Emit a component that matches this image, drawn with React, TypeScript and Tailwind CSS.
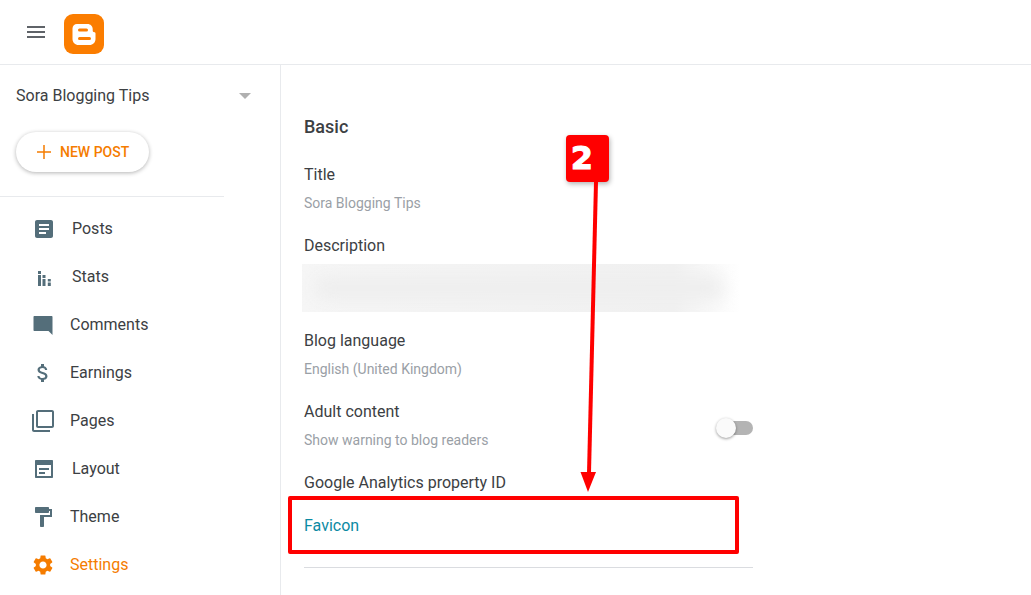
import React from "react";
import { MdMenu, MdArticle, MdAttachMoney, MdFilterNone, MdFormatPaint, MdSettings } from "react-icons/md";

const StatsIcon = () => (
  <svg width="24" height="24" viewBox="0 0 24 24" fill="currentColor">
    <rect x="6" y="6" width="3" height="3" />
    <rect x="6" y="10" width="3" height="11" />
    <rect x="10.500" y="10" width="3" height="3" />
    <rect x="10.500" y="14" width="3" height="7" />
    <rect x="15.800" y="14" width="3" height="2.500" />
    <rect x="15.800" y="17.500" width="3" height="3.500" />
  </svg>
);

const CommentIcon = () => (
  <svg width="24" height="24" viewBox="0 0 24 24" fill="currentColor">
    <path d="M3.500 3h17c.6 0 1 .4 1 1l.01 18-4-4H3.500c-.6 0-1-.4-1-1V4c0-.6.4-1 1-1z" />
  </svg>
);

const LayoutIcon = () => (
  <svg width="24" height="24" viewBox="0 0 24 24" fill="currentColor">
    <path d="M20 3H4c-.6 0-1 .4-1 1v16c0 .6.4 1 1 1h16c.6 0 1-.4 1-1V4c0-.6-.4-1-1-1zm-1 16H5V8h14v11z" />
    <rect x="7" y="11" width="10" height="2" />
    <rect x="7" y="15" width="6" height="2" />
  </svg>
);

const items = [
  { label: "Posts", icon: <MdArticle size={24} />, iconCls: "ml-8", gapCls: "ml-4" },
  { label: "Stats", icon: <StatsIcon />, iconCls: "ml-8", gapCls: "ml-4" },
  { label: "Comments", icon: <CommentIcon />, iconCls: "ml-[31px]", gapCls: "ml-[15px]" },
  { label: "Earnings", icon: <MdAttachMoney size={24} />, iconCls: "ml-[31px]", gapCls: "ml-[15px]" },
  { label: "Pages", icon: <MdFilterNone size={24} />, iconCls: "ml-[31px]", gapCls: "ml-[15px]" },
  { label: "Layout", icon: <LayoutIcon />, iconCls: "ml-8", gapCls: "ml-4" },
  { label: "Theme", icon: <MdFormatPaint size={24} />, iconCls: "ml-[31px]", gapCls: "ml-[15px]" },
  { label: "Settings", icon: <MdSettings size={24} />, iconCls: "ml-[31px]", gapCls: "ml-[15px]", active: true },
];

const Label = ({ children, cls }: { children: React.ReactNode; cls: string }) => (
  <div className={`h-6 leading-6 text-[16px] text-[#3c4043] ${cls}`}>{children}</div>
);

const Sub = ({ children }: { children: React.ReactNode }) => (
  <div className="mt-1 h-6 leading-6 text-[14px] text-[#9aa0a6]">{children}</div>
);

export default function App() {
  return (
    <div className="relative h-[595px] w-[1031px] overflow-hidden bg-white font-['Roboto',sans-serif]">
      <header className="flex h-[65px] items-center border-b border-[#e8eaed]">
        <MdMenu size={24} className="ml-6 text-[#5f6368]" />
        <svg className="ml-4 mt-1" width="40" height="40" viewBox="0 0 40 40">
          <rect width="40" height="40" rx="9" fill="#fb7d00" />
          <path d="M13 10h10.500c3 0 5.200 2.200 5.200 5v1.600c0 1 .6 1.600 1.600 1.600 1 0 1.200.6 1.200 1.400V25c0 3.400-2.600 6-6 6H14.500c-3.300 0-6-2.600-6-6V14.500C8.500 12 10.500 10 13 10z" fill="#fff" />
          <rect x="14" y="14.500" width="10" height="3" rx="1.500" fill="#fb7d00" />
          <rect x="14" y="23" width="13" height="3" rx="1.500" fill="#fb7d00" />
        </svg>
      </header>

      <div className="flex h-[530px]">
        <aside className="w-[281px] shrink-0 border-r border-[#e8eaed]">
          <div className="flex h-[62px] items-center justify-between pl-4 pr-[29px]">
            <span className="text-[16px] text-[#3c4043]">Sora Blogging Tips</span>
            <span className="h-0 w-0 border-x-[6px] border-t-[6px] border-x-transparent border-t-[#b0b0b0]" />
          </div>
          <button className="ml-4 mt-[5px] flex h-10 w-[133px] items-center rounded-full bg-white pl-[19px] text-[14px] font-medium text-[#f57c00] shadow-[0_1px_4px_rgba(0,0,0,0.3)]">
            <svg width="18" height="18" viewBox="0 0 18 18" fill="#f57c00">
              <rect x="2" y="8.250" width="14" height="1.500" />
              <rect x="8.250" y="2" width="1.500" height="14" />
            </svg>
            <span className="ml-[7px]">NEW POST</span>
          </button>
          <div className="mt-6 h-px w-56 bg-[#e8eaed]" />
          <nav className="mt-2">
            {items.map((it) => (
              <div key={it.label} className="flex h-12 items-center">
                <span className={`${it.iconCls} ${it.active ? "text-[#f57c00]" : "text-[#546e7a]"}`}>{it.icon}</span>
                <span className={`${it.gapCls} text-[16px] ${it.active ? "text-[#f57c00]" : "text-[#3c4043]"}`}>{it.label}</span>
              </div>
            ))}
          </nav>
        </aside>

        <main className="w-[473px] pl-[23px] pr-px">
          <h2 className="mt-[50px] h-6 text-[18px] font-medium leading-6 text-[#3c4043]">Basic</h2>
          <Label cls="mt-6">Title</Label>
          <Sub>Sora Blogging Tips</Sub>
          <Label cls="mt-[19px]">Description</Label>
          <div className="-ml-[2px] mt-[6px] h-12 w-[438px] overflow-hidden bg-gradient-to-r from-[#f6f6f6] via-[#f1f1f1] via-85% to-white">
            <div className="ml-3 mt-3 h-6 w-[410px] rounded-full bg-[#eeeeee] blur-sm" />
          </div>
          <Label cls="mt-[17px]">Blog language</Label>
          <Sub>English (United Kingdom)</Sub>
          <div className="mt-[19px] flex items-center justify-between">
            <div>
              <Label cls="">Adult content</Label>
              <Sub>Show warning to blog readers</Sub>
            </div>
            <div className="mt-1 flex h-[14px] w-[37px] items-center justify-start rounded-full bg-[linear-gradient(90deg,#fff_0,#fff_20%,#b4b4b4_20%)]">
              <span className="h-5 w-5 rounded-full bg-[#fafafa] shadow-[0_1px_3px_rgba(0,0,0,0.4)]" />
            </div>
          </div>
          <Label cls="mt-[19px]">Google Analytics property ID</Label>
          <div className="mt-[19px] h-6 text-[16px] leading-6 text-[#0b8aa3]">Favicon</div>
          <div className="mt-[29px] h-px bg-[#dadce0]" />
        </main>
      </div>

      {/* Annotations laid over the page */}
      <div className="absolute left-[566px] top-[135px] flex h-[47px] w-[43px] items-center justify-center rounded-[4px] bg-[#ff0000] pb-[2px] pr-[11px] font-['DejaVu_Sans',sans-serif] text-[32px] font-bold leading-none text-white shadow-[1px_2px_5px_rgba(0,0,0,0.3)] [-webkit-text-stroke:1px_white]">
        2
      </div>
      <svg className="absolute left-0 top-0" width="1031" height="595" viewBox="0 0 1031 595">
        <line x1="596" y1="182" x2="589" y2="473" stroke="#ff0000" strokeWidth="4" />
        <polygon points="580.500,472 596,472 588,492" fill="#ff0000" />
      </svg>
      <div className="absolute left-[288px] top-[496px] h-[58px] w-[451px] rounded-[2px] border-4 border-[#ff0000]" />
    </div>
  );
}
